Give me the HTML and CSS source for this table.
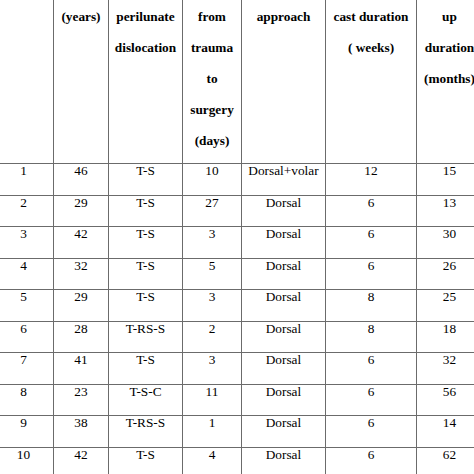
FILE: index.html
```html
<!DOCTYPE html>
<html>
<head>
<meta charset="utf-8">
<link rel="stylesheet" href="styles.css">
</head>
<body>
<div class="page">
<table class="data">
  <colgroup>
    <col class="c1"><col class="c2"><col class="c3"><col class="c4"><col class="c5"><col class="c6"><col class="c7">
  </colgroup>
  <thead>
    <tr>
      <th></th>
      <th>(years)</th>
      <th>perilunate<br>dislocation</th>
      <th>from<br>trauma<br>to<br>surgery<br>(days)</th>
      <th>approach</th>
      <th>cast duration<br>( weeks)</th>
      <th>up<br>duration<br>(months)</th>
    </tr>
  </thead>
  <tbody>
    <tr><td>1</td><td>46</td><td>T-S</td><td>10</td><td>Dorsal+volar</td><td>12</td><td>15</td></tr>
    <tr><td>2</td><td>29</td><td>T-S</td><td>27</td><td>Dorsal</td><td>6</td><td>13</td></tr>
    <tr><td>3</td><td>42</td><td>T-S</td><td>3</td><td>Dorsal</td><td>6</td><td>30</td></tr>
    <tr><td>4</td><td>32</td><td>T-S</td><td>5</td><td>Dorsal</td><td>6</td><td>26</td></tr>
    <tr><td>5</td><td>29</td><td>T-S</td><td>3</td><td>Dorsal</td><td>8</td><td>25</td></tr>
    <tr><td>6</td><td>28</td><td>T-RS-S</td><td>2</td><td>Dorsal</td><td>8</td><td>18</td></tr>
    <tr><td>7</td><td>41</td><td>T-S</td><td>3</td><td>Dorsal</td><td>6</td><td>32</td></tr>
    <tr><td>8</td><td>23</td><td>T-S-C</td><td>11</td><td>Dorsal</td><td>6</td><td>56</td></tr>
    <tr><td>9</td><td>38</td><td>T-RS-S</td><td>1</td><td>Dorsal</td><td>6</td><td>14</td></tr>
    <tr><td>10</td><td>42</td><td>T-S</td><td>4</td><td>Dorsal</td><td>6</td><td>62</td></tr>
  </tbody>
</table>
</div>
</body>
</html>
```
FILE: styles.css
```css
html, body {
  margin: 0;
  padding: 0;
  background: #ffffff;
}
.page {
  width: 474px;
  height: 474px;
  overflow: hidden;
}
.data {
  border-collapse: collapse;
  table-layout: fixed;
  width: 489px;
  margin-top: -10px;
  margin-left: -7px;
  font-family: "Liberation Serif", "Times New Roman", serif;
  font-size: 13.3px;
  color: #000000;
}
.c1 { width: 60px; }
.c2 { width: 55px; }
.c3 { width: 74px; }
.c4 { width: 59px; }
.c5 { width: 84px; }
.c6 { width: 91px; }
.c7 { width: 66px; }
.data th,
.data td {
  border: 1px solid #6b6b6b;
  text-align: center;
  vertical-align: top;
  white-space: nowrap;
  overflow: visible;
}
.data th {
  font-weight: bold;
  line-height: 31px;
  padding: 10px 0 7px;
  height: 155px;
  box-sizing: border-box;
}
.data td {
  line-height: 14px;
  padding: 0;
  height: 31.5px;
  box-sizing: border-box;
}
```
